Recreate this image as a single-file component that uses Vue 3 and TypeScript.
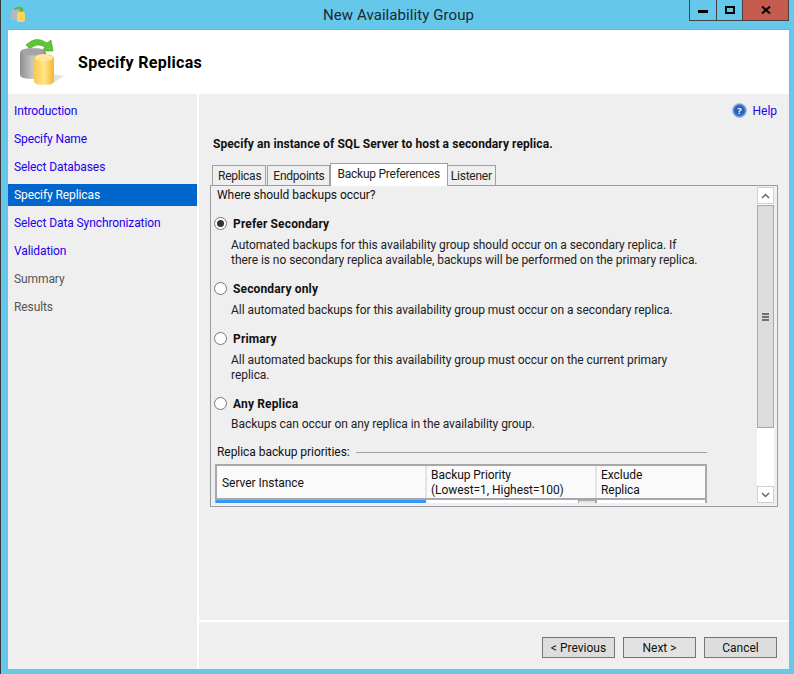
<script setup lang="ts">
interface Step { label: string; kind: 'link' | 'active' | 'off' }
interface BackupOption { label: string; text: string; checked: boolean }

const steps: Step[] = [
  { label: 'Introduction', kind: 'link' },
  { label: 'Specify Name', kind: 'link' },
  { label: 'Select Databases', kind: 'link' },
  { label: 'Specify Replicas', kind: 'active' },
  { label: 'Select Data Synchronization', kind: 'link' },
  { label: 'Validation', kind: 'link' },
  { label: 'Summary', kind: 'off' },
  { label: 'Results', kind: 'off' },
]

const options: BackupOption[] = [
  {
    label: 'Prefer Secondary',
    text: 'Automated backups for this availability group should occur on a secondary replica. If there is no secondary replica available, backups will be performed on the primary replica.',
    checked: true,
  },
  { label: 'Secondary only', text: 'All automated backups for this availability group must occur on a secondary replica.', checked: false },
  { label: 'Primary', text: 'All automated backups for this availability group must occur on the current primary replica.', checked: false },
  { label: 'Any Replica', text: 'Backups can occur on any replica in the availability group.', checked: false },
]

const tabs = ['Replicas', 'Endpoints', 'Backup Preferences', 'Listener']
</script>

<template>
  <div class="win">
    <div class="titlebar">
      <svg class="app-icon" width="15" height="17" viewBox="0 0 15 17">
        <path d="M3 4 Q7 0 11 3 L12 2 V6 H8 L9.5 4.5 Q7 3 4.5 5 Z" fill="#5cb531" />
        <rect x="0" y="5" width="9" height="10" rx="2" fill="#b8b8b8" />
        <rect x="6" y="7" width="8" height="10" rx="2" fill="#fcd45c" />
      </svg>
      <span class="title">New Availability Group</span>
      <div class="win-btns">
        <div class="wb wb-min"><i></i></div>
        <div class="wb wb-max"><i></i></div>
        <div class="wb wb-close">
          <svg width="10" height="8" viewBox="0 0 10 8"><path d="M1 0.5 L9 7.5 M9 0.5 L1 7.5" stroke="#000" stroke-width="2" /></svg>
        </div>
      </div>
    </div>

    <div class="client">
      <header class="head">
        <svg class="head-icon" width="44" height="48" viewBox="0 0 44 48">
          <defs>
            <linearGradient id="grey" x1="0" x2="1" y1="0" y2="0">
              <stop offset="0" stop-color="#8f8f8f" />
              <stop offset="0.5" stop-color="#c8c8c8" />
              <stop offset="1" stop-color="#8a8a8a" />
            </linearGradient>
            <linearGradient id="gold" x1="0" x2="1" y1="0" y2="0">
              <stop offset="0" stop-color="#fbc94a" />
              <stop offset="0.5" stop-color="#ffe68c" />
              <stop offset="1" stop-color="#f6b730" />
            </linearGradient>
          </defs>
          <path d="M6 7 Q16 -3 27 5 L31 2 L33 13 L22 13 L25 9 Q17 4 10 11 Z" fill="#5fc736" stroke="#3f9a20" stroke-width="0.6" />
          <path d="M0 15 Q0 10 13 10 Q26 10 26 15 V37 Q26 41 13 41 Q0 41 0 37 Z" fill="url(#grey)" />
          <ellipse cx="13" cy="14" rx="11" ry="3.4" fill="#a5a5a5" />
          <path d="M30 47 L44 38 L34 36 Z" fill="#d6d6d6" opacity="0.7" />
          <path d="M14 21 Q14 16 24 16 Q34 16 34 21 V43 Q34 47 24 47 Q14 47 14 43 Z" fill="url(#gold)" />
          <ellipse cx="24" cy="20" rx="9" ry="3.2" fill="#ffeaa0" />
        </svg>
        <h1>Specify Replicas</h1>
      </header>

      <div class="body">
        <nav class="side">
          <div v-for="s in steps" :key="s.label" class="step" :class="s.kind">{{ s.label }}</div>
        </nav>

        <main class="main">
          <div class="help">
            <svg width="15" height="15" viewBox="0 0 16 16">
              <circle cx="8" cy="8" r="7.4" fill="#4f86d8" stroke="#a9c3ea" />
              <circle cx="8" cy="8" r="5.4" fill="#2c5fb8" />
              <text x="8" y="11.5" text-anchor="middle" font-size="10" font-weight="700" fill="#fff" font-family="Noto Sans, sans-serif">?</text>
            </svg>
            <span>Help</span>
          </div>
          <p class="lead">Specify an instance of SQL Server to host a secondary replica.</p>

          <div class="tabs">
            <div v-for="t in tabs" :key="t" class="tab" :class="{ on: t === 'Backup Preferences' }">{{ t }}</div>
          </div>

          <section class="panel">
            <div class="scroll">
              <div class="q">Where should backups occur?</div>
              <div v-for="o in options" :key="o.label" class="opt">
                <div class="opt-head">
                  <span class="radio" :class="{ checked: o.checked }"></span>
                  <b>{{ o.label }}</b>
                </div>
                <p>{{ o.text }}</p>
              </div>
              <div class="group">
                <span>Replica backup priorities:</span>
                <i></i>
              </div>
              <div class="grid">
                <div class="grid-head">
                  <div class="cell c1 mid">Server Instance</div>
                  <div class="cell c2">Backup Priority<br />(Lowest=1, Highest=100)</div>
                  <div class="cell c3">Exclude<br />Replica</div>
                </div>
                <div class="grid-row">
                  <div class="sel"></div>
                  <div class="spin"><span></span></div>
                  <div class="last"></div>
                </div>
              </div>
            </div>
            <div class="sbar">
              <div class="sb-btn">
                <svg width="9" height="6" viewBox="0 0 9 6"><path d="M1 5 L4.5 1.5 L8 5" fill="none" stroke="#666" stroke-width="1.5" /></svg>
              </div>
              <div class="sb-thumb"><i></i><i></i><i></i></div>
              <div class="sb-track"></div>
              <div class="sb-btn">
                <svg width="9" height="6" viewBox="0 0 9 6"><path d="M1 1 L4.5 4.5 L8 1" fill="none" stroke="#666" stroke-width="1.5" /></svg>
              </div>
            </div>
          </section>

          <footer class="foot">
            <button type="button">&lt; Previous</button>
            <button type="button" class="def">Next &gt;</button>
            <button type="button">Cancel</button>
          </footer>
        </main>
      </div>
    </div>
  </div>
</template>

<style>
html, body { margin: 0; background: #65c8ea; }
</style>

<style scoped>
* { box-sizing: border-box; }
.win { width: 794px; height: 674px; background: #65c8ea; border-left: 1px solid #3a3a3a; padding: 0 5px 5px 7px; display: flex; flex-direction: column; overflow: hidden; font: 12px/16px Roboto, sans-serif; color: #111; letter-spacing: -0.05px; }
.titlebar { height: 29px; flex-shrink: 0; display: flex; align-items: flex-start; position: relative; }
.app-icon { margin: 5px 0 0 3px; }
.title { position: absolute; left: 0; right: 0; top: 6px; text-align: center; font-size: 15px; line-height: 18px; color: #1a2a33; letter-spacing: 0.08px; }
.win-btns { position: absolute; right: 0; top: 0; height: 21px; display: flex; border: 1px solid #4a4040; border-top: 0; }
.wb { height: 20px; display: flex; align-items: center; justify-content: center; }
.wb-min { width: 27px; border-right: 1px solid #4a4040; }
.wb-min i { width: 10px; height: 3px; background: #000; margin-top: 3px; }
.wb-max { width: 26px; border-right: 1px solid #4a4040; }
.wb-max i { width: 10px; height: 8px; border: 2px solid #000; }
.wb-close { width: 45px; background: #c55a4f; }
.client { flex: 1; min-height: 0; display: flex; flex-direction: column; background: #fff; border-top: 1px solid #9aa7ad; }
.head { height: 64px; flex-shrink: 0; background: #fff; display: flex; align-items: center; }
.head-icon { margin-left: 12px; }
h1 { margin: 1px 0 0 14px; font-size: 16px; line-height: 20px; font-weight: 700; color: #000; letter-spacing: 0.3px; }
.body { flex: 1; min-height: 0; display: flex; gap: 2px; }
.side { width: 189px; background: #efefef; padding-top: 3px; }
.step { height: 28px; padding-left: 6px; line-height: 28px; white-space: nowrap; letter-spacing: -0.1px; }
.step.link { color: #2200ee; }
.step.active { color: #fff; background: #0066cc; height: 22px; line-height: 22px; margin: 3px 0; }
.step.off { color: #555; }
.main { flex: 1; background: #efefef; padding: 0 0 0 11px; display: flex; flex-direction: column; }
.help { height: 32px; padding: 2px 12px 0 0; flex-shrink: 0; display: flex; justify-content: flex-end; align-items: center; gap: 6px; color: #2200ee; }
.help svg { margin-top: -2px; }
.lead { margin: 10px 0 0 3px; height: 16px; font-weight: 700; color: #111; white-space: nowrap; letter-spacing: 0.08px; }
.tabs { height: 22px; margin-top: 11px; display: flex; align-items: flex-end; padding-left: 2px; position: relative; z-index: 1; }
.tab { height: 20px; line-height: 20px; padding: 0 4px 0 5px; background: #efefef; border: 1px solid #a0a0a0; border-bottom: 0; margin-left: 1px; white-space: nowrap; color: #222; letter-spacing: -0.25px; }
.tab:first-child { margin-left: 0; }
.tab.on { height: 23px; line-height: 20px; background: #fff; padding: 0 7px; position: relative; margin-left: 0; margin-bottom: -1px; }
.tab.on + .tab { margin-left: -1px; padding: 0 3px; }
.panel { width: 568px; height: 322px; flex-shrink: 0; border: 1px solid #9a9aa6; display: flex; padding: 1px 3px 3px 0; background: #efefef; }
.scroll { width: 545px; padding-left: 6px; overflow: hidden; }
.q { height: 16px; margin-bottom: 13px; }
.opt-head { height: 16px; display: flex; align-items: center; gap: 6px; }
.opt-head b { font-weight: 700; color: #111; letter-spacing: 0.15px; }
.radio { width: 13px; height: 13px; border-radius: 50%; border: 1px solid #777; background: #fff; display: flex; align-items: center; justify-content: center; margin: -1px 0 0 -3px; }
.radio.checked::after { content: ""; width: 7px; height: 7px; border-radius: 50%; background: #333; }
.opt { padding-bottom: 13px; }
.opt p { margin: 6px 0 0 14px; width: 472px; line-height: 15px; color: #222; }
.opt:nth-of-type(5) { padding-bottom: 12px; }
.opt:nth-of-type(5) p { margin-top: 5px; }
.group { display: flex; align-items: center; gap: 6px; height: 16px; width: 490px; }
.group i { flex: 1; height: 1px; background: #a0a0a0; }
.grid { width: 492px; margin: 4px 0 0 -2px; border: 2px solid #a8a8a8; border-bottom: 0; background: #fff; }
.grid-head { display: flex; height: 34px; border-bottom: 2px solid #a8a8a8; background: #fff; }
.cell { line-height: 15px; padding: 2px 5px 0 4px; background: #fafafa; border-right: 2px solid #e4e4e4; white-space: nowrap; }
.cell.mid { line-height: 34px; padding: 0 5px; }
.c1 { width: 210px; }
.c2 { width: 170px; }
.c3 { flex: 1; border-right: 0; }
.grid-row { display: flex; height: 20px; }
.sel { width: 210px; margin-left: -1px; background: #3399ff; flex-shrink: 0; }
.spin { width: 171px; display: flex; justify-content: flex-end; border-right: 1px solid #a8a8a8; }
.spin span { width: 18px; height: 5px; background: #e4e4e4; border: 1px solid #a8a8a8; }
.last { flex: 1; }
.sbar { width: 17px; margin-left: auto; display: flex; flex-direction: column; background: #fff; }
.sb-btn { height: 17px; flex-shrink: 0; background: #fff; border: 1px solid #d0d0d0; display: flex; align-items: center; justify-content: center; }
.sb-thumb { height: 223px; flex-shrink: 0; margin-top: 1px; background: #dcdcdc; border: 1px solid #a8a8a8; display: flex; flex-direction: column; align-items: center; justify-content: center; gap: 1px; }
.sb-thumb i { width: 7px; height: 2px; background: #707070; }
.sb-track { flex: 1; }
.foot { margin-top: auto; height: 49px; margin-left: -11px; border-top: 2px solid #fff; display: flex; justify-content: flex-end; gap: 8px; padding: 15px 12px 0 0; }
button { width: 73px; height: 21px; padding: 0; background: #dddddd; border: 1px solid #777; font: inherit; line-height: 18px; color: #111; }
button.def { border-color: #4a7ea8; background: #e2e2e2; }
</style>
